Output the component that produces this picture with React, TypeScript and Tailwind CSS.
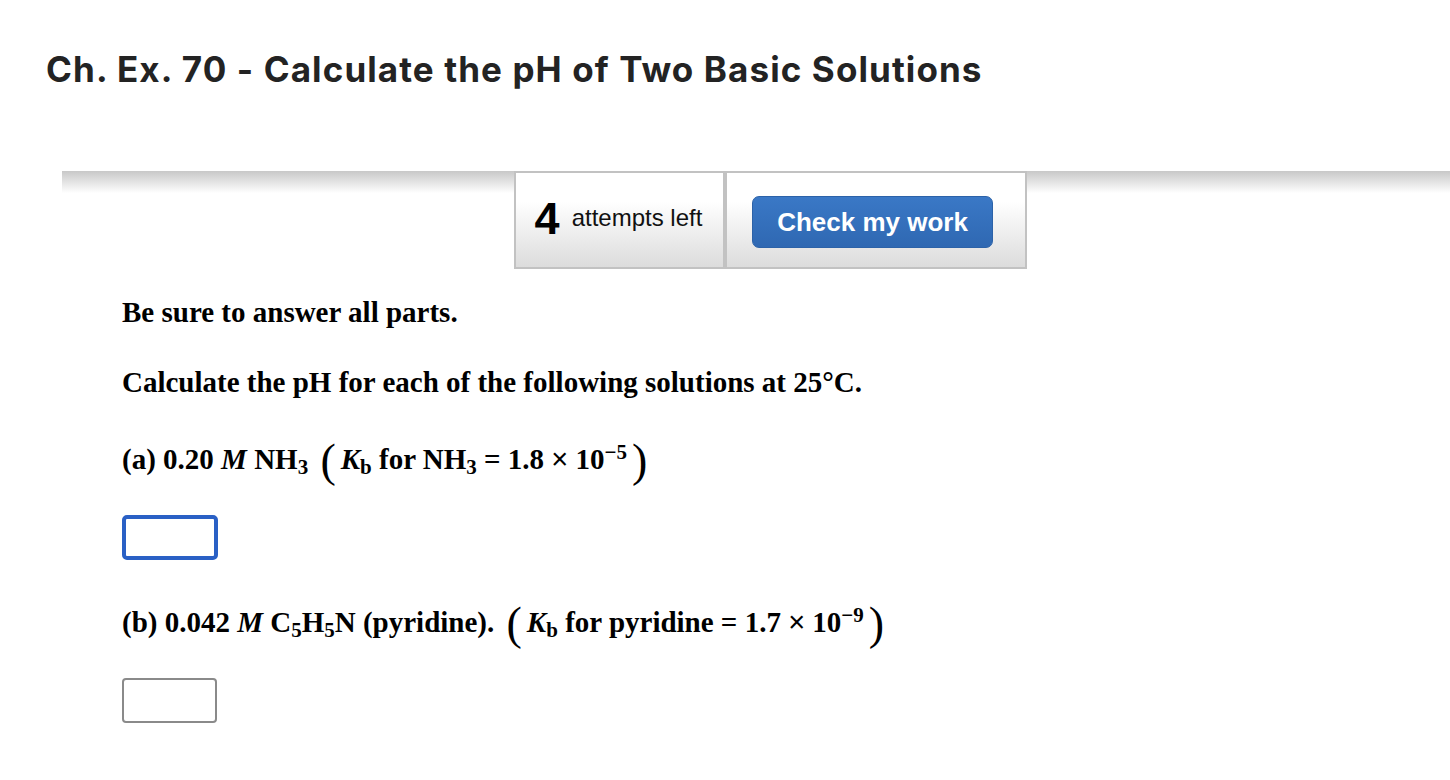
import React from 'react';

const serif = { fontFamily: '"Liberation Serif", "Times New Roman", serif' };
const sans = { fontFamily: '"Liberation Sans", Arial, sans-serif' };

function BigParen({ children }: { children: React.ReactNode }) {
  return (
    <span className="mx-[5px] inline-block align-[-7px] text-[46px] leading-[0] font-normal" style={serif}>
      {children}
    </span>
  );
}

function Kb() {
  return (
    <>
      <i>K</i>
      <sub className="text-[21px]">b</sub>
    </>
  );
}

export default function App() {
  return (
    <div className="min-h-screen w-full bg-white text-black">
      <h1 className="pl-[46px] pt-[48px] text-[35px] leading-[42px] font-bold text-[#232323] tracking-[1.1px]" style={{ fontFamily: 'Inter, Lato, sans-serif' }}>
        Ch. Ex. 70 - Calculate the pH of Two Basic Solutions
      </h1>

      {/* attempts bar */}
      <div className="mt-[81px] ml-[62px] bg-[linear-gradient(to_bottom,#c8c8c8,#ffffff_22px)]">
        <div className="ml-[452px] flex h-[98px] w-[513px]" style={sans}>
          <div className="flex w-[213px] items-center justify-center gap-[12px] border-2 border-r-[4px] border-[#c2c2c2] bg-[linear-gradient(to_bottom,#ffffff_30%,#dcdcdc)] pb-[4px] pr-[2px]">
            <span className="text-[45px] font-bold leading-none">4</span>
            <span className="text-[24px] leading-none text-[#111]">attempts left</span>
          </div>
          <div className="flex flex-1 items-start border-2 border-l-0 border-[#c2c2c2] bg-[linear-gradient(to_bottom,#ffffff_30%,#dcdcdc)] pl-[25px] pt-[23px]">
            <button className="h-[52px] w-[241px] rounded-[7px] bg-[linear-gradient(to_bottom,#3a78c6,#2f68b2)] text-[26px] font-bold text-white border border-[#2c62a8]">
              Check my work
            </button>
          </div>
        </div>
      </div>

      <div className="pl-[122px] text-[29px] font-bold" style={serif}>
        <div className="mt-[26px] h-[34px] leading-[34px]">Be sure to answer all parts.</div>
        <div className="mt-[36px] h-[34px] leading-[34px]">Calculate the pH for each of the following solutions at 25°C.</div>

        <div className="mt-[43px] h-[34px] leading-[34px] whitespace-nowrap">
          (a) 0.20 <i>M</i> NH<sub className="text-[21px]">3</sub> <BigParen>(</BigParen>
          <Kb /> for NH<sub className="text-[21px]">3</sub> = 1.8 <span className="font-normal" style={sans}>×</span> 10<sup className="text-[21px]">−5</sup>
          <BigParen>)</BigParen>
        </div>

        <div className="mt-[39px] h-[45px] w-[96px] rounded-[5px] border-[4px] border-[#2a60c5]" />

        <div className="mt-[45px] h-[34px] leading-[34px] whitespace-nowrap">
          (b) 0.042 <i>M</i> C<sub className="text-[21px]">5</sub>H<sub className="text-[21px]">5</sub>N (pyridine). <BigParen>(</BigParen>
          <Kb /> for pyridine = 1.7 <span className="font-normal" style={sans}>×</span> 10<sup className="text-[21px]">−9</sup>
          <BigParen>)</BigParen>
        </div>

        <div className="mt-[39px] h-[45px] w-[95px] rounded-[4px] border-2 border-[#8a8a8a]" />
      </div>
    </div>
  );
}
